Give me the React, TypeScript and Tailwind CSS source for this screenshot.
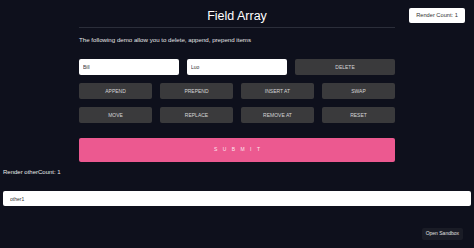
import React from "react";

const btn =
  "h-[16px] rounded-[2px] bg-[#3a3a3c] text-[5px] leading-none text-[#d6d6d6] uppercase flex items-center justify-center";

export default function App() {
  const row2 = ["APPEND", "PREPEND", "INSERT AT", "SWAP"];
  const row3 = ["MOVE", "REPLACE", "REMOVE AT", "RESET"];
  return (
    <div className="relative min-h-[248px] bg-[#0e101c] text-[#e8e8e8] font-['Liberation_Sans',Arial,sans-serif]">
      <div className="absolute top-[8px] right-[9px] w-[56px] h-[15px] rounded-[2px] bg-white text-[#333] text-[5.7px] flex items-center justify-center">
        Render Count: 1
      </div>
      <div className="w-[316px] mx-auto pt-[6px]">
        <h1 className="text-center text-[12.5px] leading-[21px] text-white">Field Array</h1>
        <div className="h-px bg-[#2b2e3a]" />
        <p className="mt-[8px] text-[6.15px] leading-[8px] text-[#e4e4e4]">
          The following demo allow you to delete, append, prepend items
        </p>
        <div className="mt-[15px] grid grid-cols-3 gap-[8px]">
          <input
            readOnly
            value="Bill"
            className="h-[16px] rounded-[2px] bg-white text-[#333] text-[5px] pl-[4px] outline-none"
          />
          <input
            readOnly
            value="Luo"
            className="h-[16px] rounded-[2px] bg-white text-[#333] text-[5px] pl-[4px] outline-none"
          />
          <div className={btn}>DELETE</div>
        </div>
        <div className="mt-[8px] grid grid-cols-4 gap-[8px]">
          {row2.map((t) => (
            <div key={t} className={btn}>
              {t}
            </div>
          ))}
        </div>
        <div className="mt-[8px] grid grid-cols-4 gap-[8px]">
          {row3.map((t) => (
            <div key={t} className={btn}>
              {t}
            </div>
          ))}
        </div>
        <div className="mt-[15px] h-[24px] rounded-[2px] bg-[#ec5990] flex items-center justify-center text-[5px] tracking-[5.4px] text-[#fbe6ee] pl-[5.4px]">
          SUBMIT
        </div>
      </div>
      <p className="mt-[6px] pl-[3px] text-[6px] leading-[8px] text-[#e8e8e8]">Render otherCount: 1</p>
      <div className="mt-[15px] px-[3px]">
        <input
          readOnly
          value="other1"
          className="w-full h-[15px] rounded-[2px] bg-white text-[#333] text-[5px] pl-[7px] outline-none block"
        />
      </div>
      <div className="absolute bottom-[8px] right-[11px] h-[12px] px-[4px] rounded-[2px] bg-[#1a1c26] text-[5px] text-[#e0e0e0] flex items-center">
        Open Sandbox
      </div>
    </div>
  );
}
